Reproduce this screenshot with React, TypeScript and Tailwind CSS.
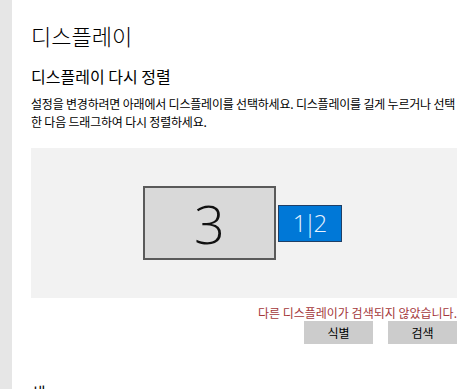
import React from "react";

export default function App() {
  const font = { fontFamily: '"Noto Sans CJK KR", "Noto Sans", sans-serif' };
  return (
    <div className="w-[474px] h-[389px] overflow-hidden flex bg-white" style={font}>
      <div className="w-[12px] shrink-0 bg-[#e6e6e6]" />
      <div className="flex-1 pl-[19px] pr-[17px] pt-[19px]">
        <h1 className="text-[22px] leading-[32px] text-[#000] font-light">디스플레이</h1>
        <h2 className="mt-[13px] text-[16px] leading-[24px] text-[#000] font-normal">디스플레이 다시 정렬</h2>
        <p className="mt-[7px] text-[12px] leading-[18px] text-[#000] tracking-[-0.2px]">
          설정을 변경하려면 아래에서 디스플레이를 선택하세요. 디스플레이를 길게 누르거나 선택
          <br />한 다음 드래그하여 다시 정렬하세요.
        </p>
        <div className="mt-[17px] h-[150px] bg-[#f2f2f2] flex items-center justify-center gap-[2px] pr-[3px]">
          <div className="w-[133px] h-[74px] border-2 border-[#5a5a5a] bg-[#d9d9d9] flex items-center justify-center">
            <span className="text-[54px] leading-none text-[#111]" style={{ fontFamily: '"Open Sans", sans-serif', fontWeight: 300 }}>3</span>
          </div>
          <div className="w-[64px] h-[37px] border border-[#1f3f66] bg-[#0078d7] flex items-center justify-center">
            <span className="text-[24px] leading-none text-[#e8f2ff] tracking-[-3px] pr-[3px]" style={{ fontFamily: '"Open Sans", sans-serif', fontWeight: 300 }}>1|2</span>
          </div>
        </div>
        <p className="mt-[6px] text-right text-[12px] leading-[18px] text-[#a4373a]">다른 디스플레이가 검색되지 않았습니다.</p>
        <div className="mt-[-1px] flex justify-end gap-[15px]">
          <button className="w-[69px] h-[23px] bg-[#cccccc] text-[12px] text-[#000]">식별</button>
          <button className="w-[69px] h-[23px] bg-[#cccccc] text-[12px] text-[#000]">검색</button>
        </div>
        <h2 className="mt-[36px] text-[16px] leading-[24px] text-[#000] font-normal">색</h2>
      </div>
    </div>
  );
}
